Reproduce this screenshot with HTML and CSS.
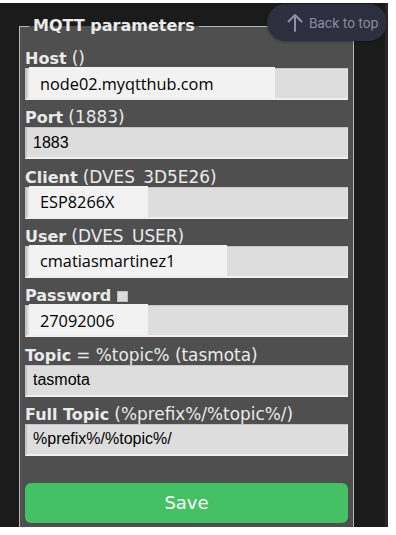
FILE: index.html
```html
<!DOCTYPE html>
<html>
<head>
<meta charset="utf-8">
<link rel="stylesheet" href="styles.css">
</head>
<body>
<div class="page">
  <fieldset class="box">
    <legend class="legend">MQTT parameters</legend>
    <div class="field">
      <div class="lbl"><b>Host</b><span class="note">()</span></div>
      <div class="inp"><span class="fill fill-host">node02.myqtthub.com</span></div>
    </div>
    <div class="field">
      <div class="lbl"><b>Port</b><span class="note">(1883)</span></div>
      <div class="inp"><span class="val">1883</span></div>
    </div>
    <div class="field">
      <div class="lbl"><b>Client</b><span class="note">(DVES_3D5E26)</span></div>
      <div class="inp"><span class="fill fill-client">ESP8266X</span></div>
    </div>
    <div class="field">
      <div class="lbl"><b>User</b><span class="note">(DVES_USER)</span></div>
      <div class="inp"><span class="fill fill-user">cmatiasmartinez1</span></div>
    </div>
    <div class="field">
      <div class="lbl"><b>Password</b><span class="chk"></span></div>
      <div class="inp"><span class="fill fill-pass">27092006</span></div>
    </div>
    <div class="field">
      <div class="lbl"><b>Topic</b><span class="note">= %topic% (tasmota)</span></div>
      <div class="inp"><span class="val">tasmota</span></div>
    </div>
    <div class="field">
      <div class="lbl"><b>Full Topic</b><span class="note">(%prefix%/%topic%/)</span></div>
      <div class="inp"><span class="val">%prefix%/%topic%/</span></div>
    </div>
    <button class="save">Save</button>
  </fieldset>
</div>
<div class="totop">
  <svg class="arrow" width="16" height="19" viewBox="0 0 16 19"><path d="M8 18V2M1.5 8.5L8 2l6.5 6.5" fill="none" stroke="#8d91a7" stroke-width="2" stroke-linecap="round" stroke-linejoin="round"/></svg>
  <span class="totop-text">Back to top</span>
</div>
</body>
</html>
```
FILE: styles.css
```css
html, body {
  margin: 0;
  padding: 0;
  background: #ffffff;
}
body {
  position: relative;
  width: 396px;
  height: 535px;
  overflow: hidden;
  font-family: "DejaVu Sans", Verdana, sans-serif;
}
.page {
  margin-top: 3px;
  width: 385px;
  height: 524px;
  background: #1b1b1b;
  border-right: 3px solid #282828;
  overflow: hidden;
}
.box {
  box-sizing: border-box;
  margin: 13px 0 0 19px;
  width: 335px;
  padding: 0 5px 20px 5px;
  border: 1px solid #b4b4b4;
  background: #4f4f4f;
  color: #eaeaea;
  font-size: 16px;
  min-width: 0;
}
.legend {
  margin-left: 4px;
  padding: 0 4px;
  font-weight: bold;
  line-height: 20px;
  color: #eaeaea;
}
.field {
  margin-top: 8.33px;
}
.field:first-of-type {
  margin-top: 13px;
}
.lbl {
  height: 19px;
  line-height: 19px;
  white-space: nowrap;
  display: flex;
  align-items: baseline;
}
.note {
  margin-left: 0.3em;
  font-size: 16.9px;
}
.chk {
  display: inline-block;
  align-self: center;
  width: 9px;
  height: 9px;
  background: #dcdcdc;
  border: 1px solid #bdbdbd;
  margin-left: 6px;
  margin-top: 1px;
}
.inp {
  position: relative;
  box-sizing: border-box;
  height: 32px;
  background: #dddddd;
  border-top: 1px solid #c6c6c6;
  border-left: 2px solid #c4c4c4;
  border-bottom: 2px solid #efefef;
  border-right: 1px solid #e6e6e6;
  display: flex;
  align-items: center;
}
.val {
  padding-left: 6px;
  font-family: "Liberation Sans", Arial, sans-serif;
  font-size: 16px;
  color: #000;
}
.fill {
  position: absolute;
  left: 2px;
  top: -2px;
  bottom: 0;
  display: flex;
  align-items: center;
  box-sizing: border-box;
  padding: 2px 0 0 11px;
  background: #f2f2f2;
  font-family: "Open Sans", "Noto Sans", sans-serif;
  font-size: 16.3px;
  color: #000;
}
.fill-host { width: 246px; }
.fill-client { width: 119px; }
.fill-user { width: 198px; }
.fill-pass { width: 119px; }
.save {
  display: block;
  margin-top: 27px;
  width: 100%;
  height: 40px;
  border: 0;
  border-radius: 6px;
  background: #45c165;
  color: #ffffff;
  font-family: "DejaVu Sans", Verdana, sans-serif;
  font-size: 18px;
  padding: 0;
}
.totop {
  position: absolute;
  left: 267px;
  top: 4px;
  width: 120px;
  height: 37px;
  box-sizing: border-box;
  border-radius: 19px;
  background: #2d2f3e;
  display: flex;
  align-items: center;
  padding-left: 20px;
  gap: 6px;
  box-shadow: 0 1px 3px rgba(0,0,0,0.3);
}
.arrow {
  display: block;
}
.totop-text {
  font-family: Inter, "Noto Sans", sans-serif;
  font-size: 13px;
  color: #8d91a7;
  white-space: nowrap;
}
```
